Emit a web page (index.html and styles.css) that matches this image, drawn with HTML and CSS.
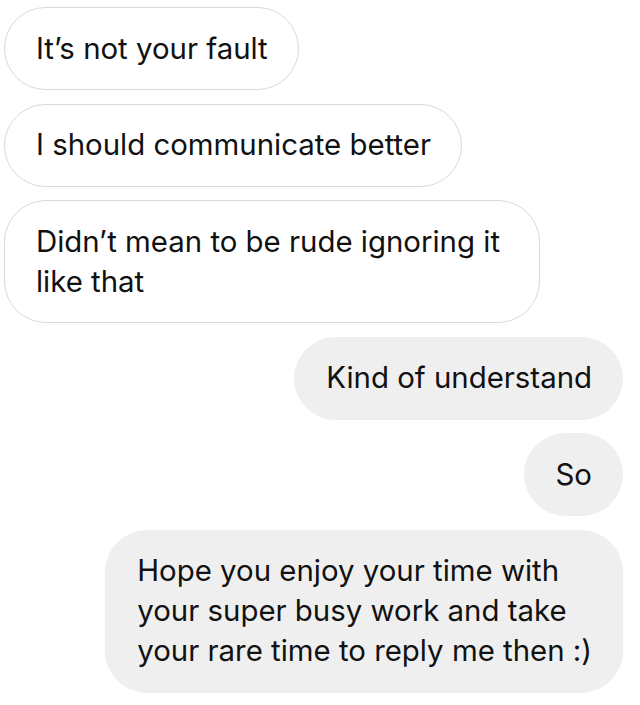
FILE: index.html
```html
<!DOCTYPE html>
<html lang="en">
<head>
<meta charset="utf-8">
<link rel="stylesheet" href="styles.css">
</head>
<body>
<div class="chat">
  <div class="msg in"><div class="bubble">It’s not your fault</div></div>
  <div class="msg in"><div class="bubble">I should communicate better</div></div>
  <div class="msg in"><div class="bubble wrapped">Didn’t mean to be rude ignoring it<br>like that</div></div>
  <div class="msg out"><div class="bubble">Kind of understand</div></div>
  <div class="msg out"><div class="bubble">So</div></div>
  <div class="msg out"><div class="bubble">Hope you enjoy your time with<br>your super busy work and take<br>your rare time to reply me then :)</div></div>
</div>
</body>
</html>
```
FILE: styles.css
```css
html, body {
  margin: 0;
  padding: 0;
  background: #ffffff;
}
body {
  width: 640px;
  height: 705px;
  overflow: hidden;
  font-family: "Inter", "Liberation Sans", sans-serif;
  color: #111111;
}
.chat {
  display: flex;
  flex-direction: column;
  gap: 13.5px;
  padding: 7px 17px 0 4px;
}
.msg {
  display: flex;
}
.msg.in { justify-content: flex-start; }
.msg.out { justify-content: flex-end; }
.bubble {
  font-size: 29.4px;
  line-height: 40px;
  padding: 20.5px 30px 20.5px 31px;
  border-radius: 42px;
}
.bubble.wrapped {
  padding-right: 39px;
}
.msg.in .bubble {
  background: #ffffff;
  border: 1px solid #d9d9d9;
}
.msg.out .bubble {
  background: #efefef;
  border: 1px solid #efefef;
}
```
